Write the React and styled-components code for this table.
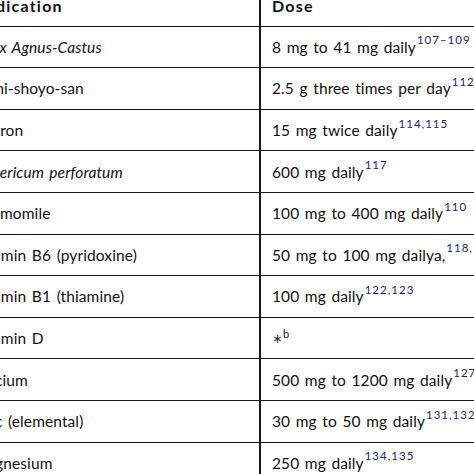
import React from 'react';
import styled, { createGlobalStyle } from 'styled-components';

const Global = createGlobalStyle`
  html, body {
    margin: 0;
    padding: 0;
    background: #fff;
    overflow: hidden;
  }
  body {
    width: 474px;
    height: 474px;
  }
`;

const Frame = styled.div`
  width: 474px;
  height: 474px;
  overflow: hidden;
  background: #fff;
`;

const Table = styled.div`
  display: grid;
  grid-template-columns: 299px 300px;
  margin-left: -38px;
  margin-top: -15px;
  font-family: 'Lato', 'Open Sans', sans-serif;
  color: #111;
`;

const Cell = styled.div`
  height: 41.6px;
  box-sizing: border-box;
  display: flex;
  align-items: center;
  padding: 0 11px;
  padding-left: ${p => (p.head && p.first ? '18px' : '11px')};
  font-size: ${p => (p.head ? '16px' : '15.5px')};
  letter-spacing: ${p => (p.head ? '1.2px' : '0.1px')};
  word-spacing: 1.5px;
  font-weight: ${p => (p.head ? 700 : 400)};
  font-style: ${p => (p.italic ? 'italic' : 'normal')};
  white-space: nowrap;
  border-bottom: 1.6px solid #1a1a1a;
  border-right: ${p => (p.first ? '2px solid #1a1a1a' : 'none')};
`;

const Ref = styled.sup`
  color: #1b1b80;
  font-size: 11.5px;
  letter-spacing: 1px;
  vertical-align: 0;
  position: relative;
  top: -7px;
  margin-left: 1px;
`;

const Star = styled.span`
  font-size: 13px;
  color: #333;
`;

const Note = styled.sup`
  font-size: 11px;
  position: relative;
  top: -5px;
  vertical-align: 0;
`;

const rows = [
  { name: 'Vitex Agnus-Castus', italic: true, dose: '8 mg to 41 mg daily', ref: '107–109' },
  { name: 'Kami-shoyo-san', dose: '2.5 g three times per day', ref: '112,113' },
  { name: 'Saffron', dose: '15 mg twice daily', ref: '114,115' },
  { name: 'Hypericum perforatum', italic: true, dose: '600 mg daily', ref: '117' },
  { name: 'Chamomile', dose: '100 mg to 400 mg daily', ref: '110' },
  { name: 'Vitamin B6 (pyridoxine)', dose: '50 mg to 100 mg dailya,', ref: '118,119' },
  { name: 'Vitamin B1 (thiamine)', dose: '100 mg daily', ref: '122,123' },
  { name: 'Vitamin D', star: true },
  { name: 'Calcium', dose: '500 mg to 1200 mg daily', ref: '127,128' },
  { name: 'Zinc (elemental)', dose: '30 mg to 50 mg daily', ref: '131,132,133' },
  { name: 'Magnesium', dose: '250 mg daily', ref: '134,135' },
];

export default function App() {
  return (
    <Frame>
      <Global />
      <Table>
        <Cell head first>Indication</Cell>
        <Cell head>Dose</Cell>
        {rows.map(r => (
          <React.Fragment key={r.name}>
            <Cell first italic={r.italic}>{r.name}</Cell>
            <Cell>
              {r.star ? (
                <>
                  <Star>∗</Star>
                  <Note>b</Note>
                </>
              ) : (
                <>
                  {r.dose}
                  <Ref>{r.ref}</Ref>
                </>
              )}
            </Cell>
          </React.Fragment>
        ))}
      </Table>
    </Frame>
  );
}
